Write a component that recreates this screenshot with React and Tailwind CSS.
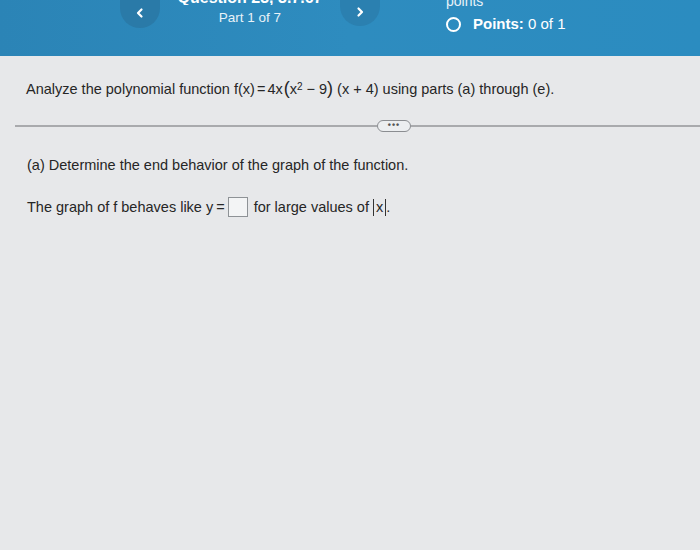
import React from 'react'

function Chevron({ dir }) {
  return (
    <svg className="w-3 h-3" viewBox="0 0 12 12" fill="none" stroke="currentColor" strokeWidth="2.2" strokeLinecap="round" strokeLinejoin="round">
      {dir === 'left' ? <path d="M7.5 2.5L4 6l3.5 3.5" /> : <path d="M4.5 2.5L8 6l-3.5 3.5" />}
    </svg>
  )
}

export default function App() {
  return (
    <div className="w-[700px] h-[550px] overflow-hidden bg-[#e7e8ea] text-[#262626]" style={{ fontFamily: '"Liberation Sans", Arial, sans-serif' }}>
      {/* Header bar */}
      <header className="h-[56px] bg-gradient-to-r from-[#2b84b6] via-[#2e8cbf] to-[#2b8cc0] text-white flex">
        <div className="ml-[120px] w-[40px] h-[30px] -mt-[2px] rounded-b-full bg-[#2a7aa8] flex items-center justify-center">
          <Chevron dir="left" />
        </div>
        <div className="w-[180px] flex flex-col items-center -mt-[9px]">
          <div className="text-[16px] font-bold leading-[14px] h-[14px] overflow-hidden">Question 23, 3.7.67</div>
          <div className="text-[13.5px] leading-[16px] mt-[5px] text-[#e8f2f8]">Part 1 of 7</div>
        </div>
        <div className="w-[40px] h-[28px] -mt-[2px] rounded-b-full bg-[#2b80b0] flex items-center justify-center">
          <Chevron dir="right" />
        </div>
        <div className="ml-[66px] flex flex-col -mt-[7px]">
          <div className="text-[14px] leading-[16px] text-[#e8f2f8]">points</div>
          <div className="flex items-center gap-[12px] mt-[4px]">
            <span className="w-[15px] h-[15px] rounded-full border-[2.5px] border-white" />
            <span className="text-[15px]"><span className="font-bold">Points:</span> 0 of 1</span>
          </div>
        </div>
      </header>

      {/* Question stem */}
      <div className="pt-[23px] pl-[26px] text-[14.5px] flex items-baseline">
        <span>Analyze the polynomial function f(x)</span>
        <span className="mx-[2px]">=</span>
        <span>4x</span>
        <span className="text-[18px] leading-none ml-[1px]">(</span>
        <span>x<sup className="text-[10px] relative -top-[4px]">2</sup></span>
        <span className="mx-[4px]">−</span>
        <span>9</span>
        <span className="text-[18px] leading-none">)</span>
        <span className="ml-[4px]">(x + 4) using parts (a) through (e).</span>
      </div>

      {/* Divider */}
      <div className="mt-[19px] ml-[15px] flex items-center">
        <div className="w-[362px] h-[2px] bg-[#a9aaad]" />
        <div className="w-[34px] h-[12px] rounded-full border-[1.5px] border-[#8b8d91] bg-[#eceef0] flex items-center justify-center text-[9px] leading-none text-[#555] font-bold tracking-[1px]">
          •••
        </div>
        <div className="flex-1 h-[2px] bg-[#a9aaad]" />
      </div>

      {/* Part (a) */}
      <div className="pt-[23px] pl-[27px] text-[14.5px]">
        <div>(a) Determine the end behavior of the graph of the function.</div>
        <div className="mt-[20px] flex items-center">
          <span>The graph of f behaves like y</span>
          <span className="mx-[3px]">=</span>
          <span className="w-[20px] h-[20px] border border-[#8e9296] bg-[#f3f4f5]" />
          <span className="ml-[6px]">for large values of</span>
          <span className="ml-[4px] flex items-center">
            <span className="w-[1px] h-[17px] bg-[#333]" />
            <span className="mx-[2px]">x</span>
            <span className="w-[1px] h-[17px] bg-[#333]" />
          </span>
          <span>.</span>
        </div>
      </div>
    </div>
  )
}
